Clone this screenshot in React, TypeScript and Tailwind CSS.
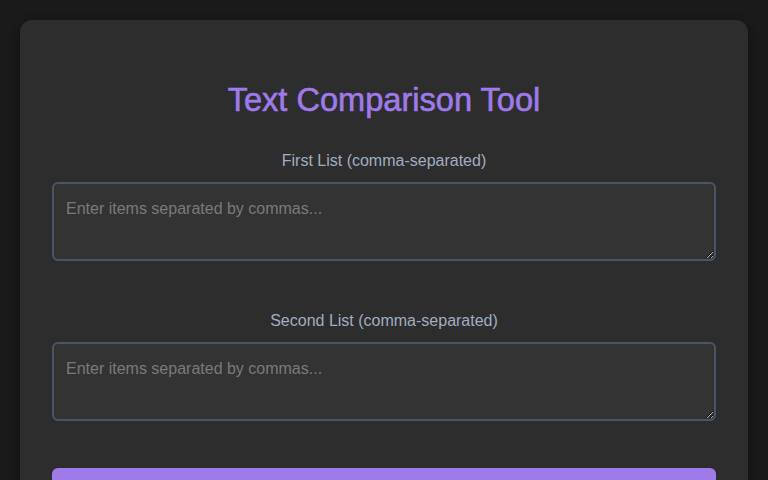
import React from 'react'

export default function App() {
  let [first, setFirst] = React.useState<string>("")
  let [second, setSecond] = React.useState<string>("")

  return (
    <div className="min-h-screen bg-[#1a1a1a] p-5 font-['Liberation_Sans',Arial,sans-serif]">
      <div className="rounded-xl bg-[#2d2d2d] px-8 pt-[61px] pb-8 shadow-[0_2px_10px_rgba(0,0,0,0.4)]">
        <h1 className="text-center text-[32.6px] leading-[37px] text-[#9f7aea] [-webkit-text-stroke:0.6px_#9f7aea]">Text Comparison Tool</h1>

        <div className="mt-[34px]">
          <label className="block text-center text-base leading-[18px] text-[#a0aec0]">First List (comma-separated)</label>
          <textarea
            className="mt-3 block h-[79px] w-full rounded-md border-2 border-[#4a5568] bg-[#333333] px-3 py-4 text-base leading-[18px] text-[#e2e8f0] placeholder:text-[#7a7a7a] outline-none"
            placeholder="Enter items separated by commas..."
            value={first}
            onChange={(e) => setFirst(e.target.value)}
          />
        </div>

        <div className="mt-[51px]">
          <label className="block text-center text-base leading-[18px] text-[#a0aec0]">Second List (comma-separated)</label>
          <textarea
            className="mt-3 block h-[79px] w-full rounded-md border-2 border-[#4a5568] bg-[#333333] px-3 py-4 text-base leading-[18px] text-[#e2e8f0] placeholder:text-[#7a7a7a] outline-none"
            placeholder="Enter items separated by commas..."
            value={second}
            onChange={(e) => setSecond(e.target.value)}
          />
        </div>

        <button className="mt-[47px] block h-12 w-full rounded-md bg-[#9f7aea] text-base text-white">Compare Lists</button>
      </div>
    </div>
  )
}
